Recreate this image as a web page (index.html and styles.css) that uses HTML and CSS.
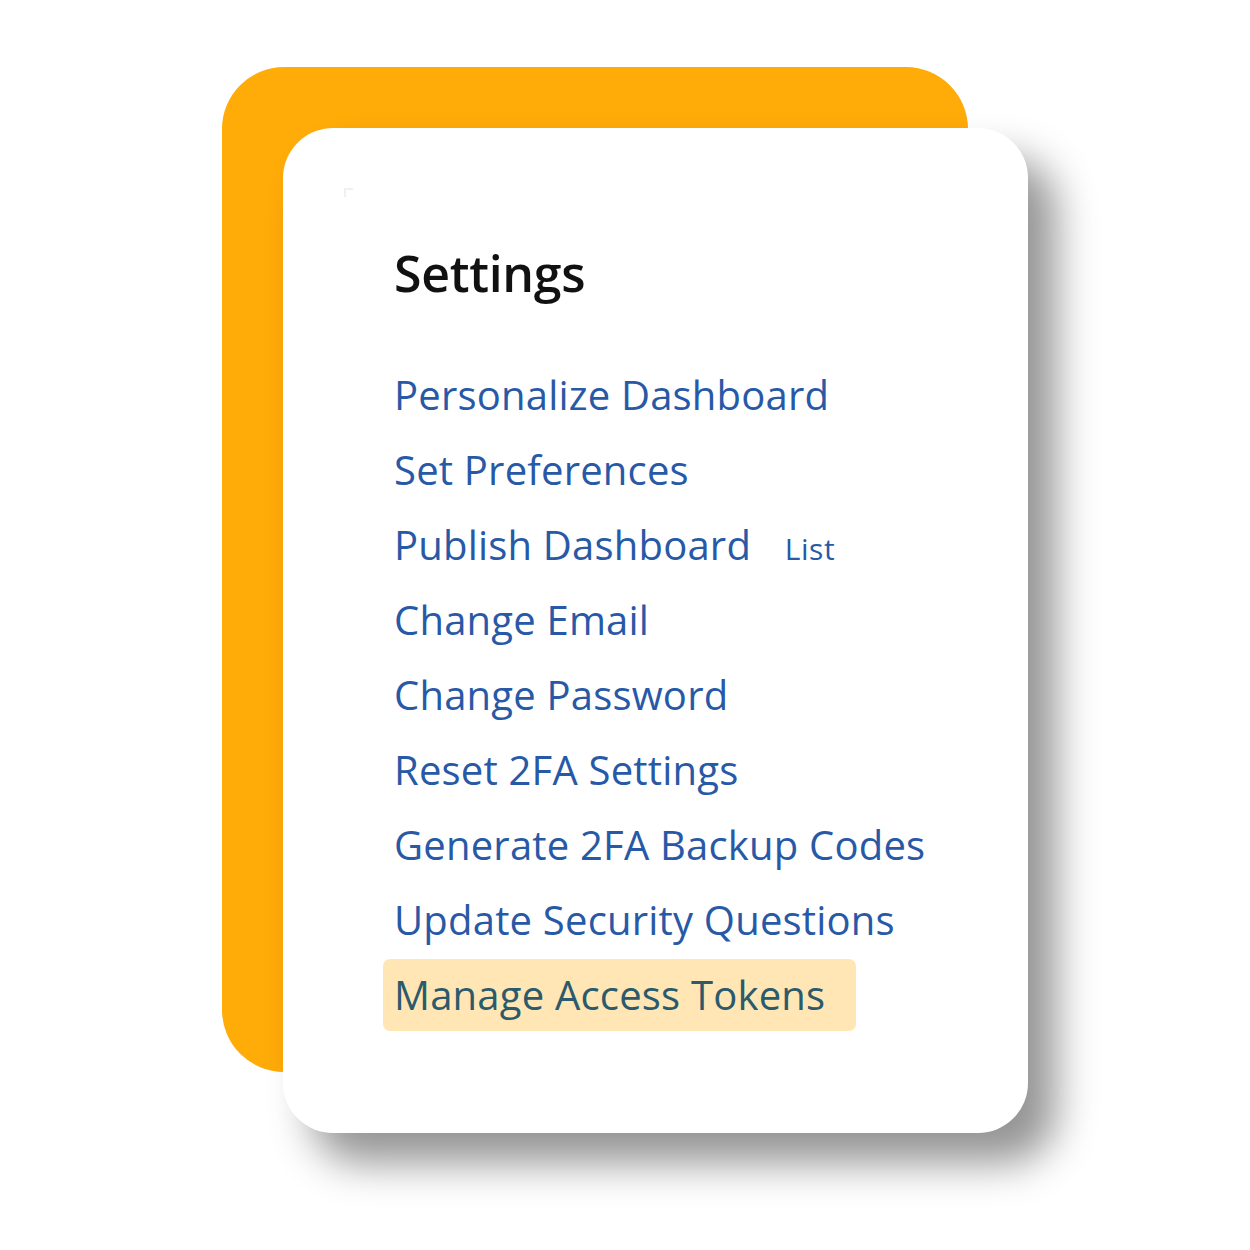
FILE: index.html
```html
<!DOCTYPE html>
<html>
<head>
<meta charset="utf-8">
<link rel="stylesheet" href="styles.css">
</head>
<body>
<div class="stage">
  <div class="backdrop">
    <div class="card">
      <div class="corner"></div>
      <h1 class="title">Settings</h1>
      <ul class="menu">
        <li class="item">Personalize Dashboard</li>
        <li class="item">Set Preferences</li>
        <li class="item">Publish Dashboard <span class="tag">List</span></li>
        <li class="item">Change Email</li>
        <li class="item">Change Password</li>
        <li class="item">Reset 2FA Settings</li>
        <li class="item">Generate 2FA Backup Codes</li>
        <li class="item">Update Security Questions</li>
        <li class="item active">Manage Access Tokens</li>
      </ul>
    </div>
  </div>
</div>
</body>
</html>
```

FILE: styles.css
```css
html, body {
  margin: 0;
  padding: 0;
  background: #ffffff;
}
body {
  font-family: "Open Sans", "Noto Sans", sans-serif;
}
.stage {
  padding: 67px 0 0 222px;
  height: 1250px;
  box-sizing: border-box;
}
.backdrop {
  width: 746px;
  height: 1005px;
  background: #ffab08;
  border-radius: 62px;
}
.card {
  position: relative;
  margin: 0 0 0 61px;
  top: 61px;
  width: 745px;
  height: 1005px;
  box-sizing: border-box;
  background: #ffffff;
  border-radius: 50px;
  padding: 60px 0 0 111px;
  box-shadow: 28px 30px 40px rgba(0, 0, 0, 0.42);
}
.corner {
  width: 7px;
  height: 7px;
  margin-left: -50px;
  border-top: 2px solid #f0f0f4;
  border-left: 2px solid #f0f0f4;
}
.title {
  margin: 46px 0 0 0;
  font-size: 50px;
  line-height: 60px;
  font-weight: 600;
  color: #111111;
  letter-spacing: -0.3px;
}
.menu {
  list-style: none;
  margin: 56px 0 0 0;
  padding: 0;
}
.item {
  font-size: 40px;
  line-height: 72px;
  height: 72px;
  margin: 0 0 3px -11px;
  padding: 0 11px;
  color: #2859a6;
  white-space: nowrap;
  letter-spacing: 0.2px;
}
.tag {
  font-size: 30px;
  margin-left: 23px;
  letter-spacing: 0.6px;
}
.active {
  display: inline-block;
  background: #ffe6b4;
  border-radius: 7px;
  padding: 0 31px 0 11px;
  color: #2a5a6c;
}
```
